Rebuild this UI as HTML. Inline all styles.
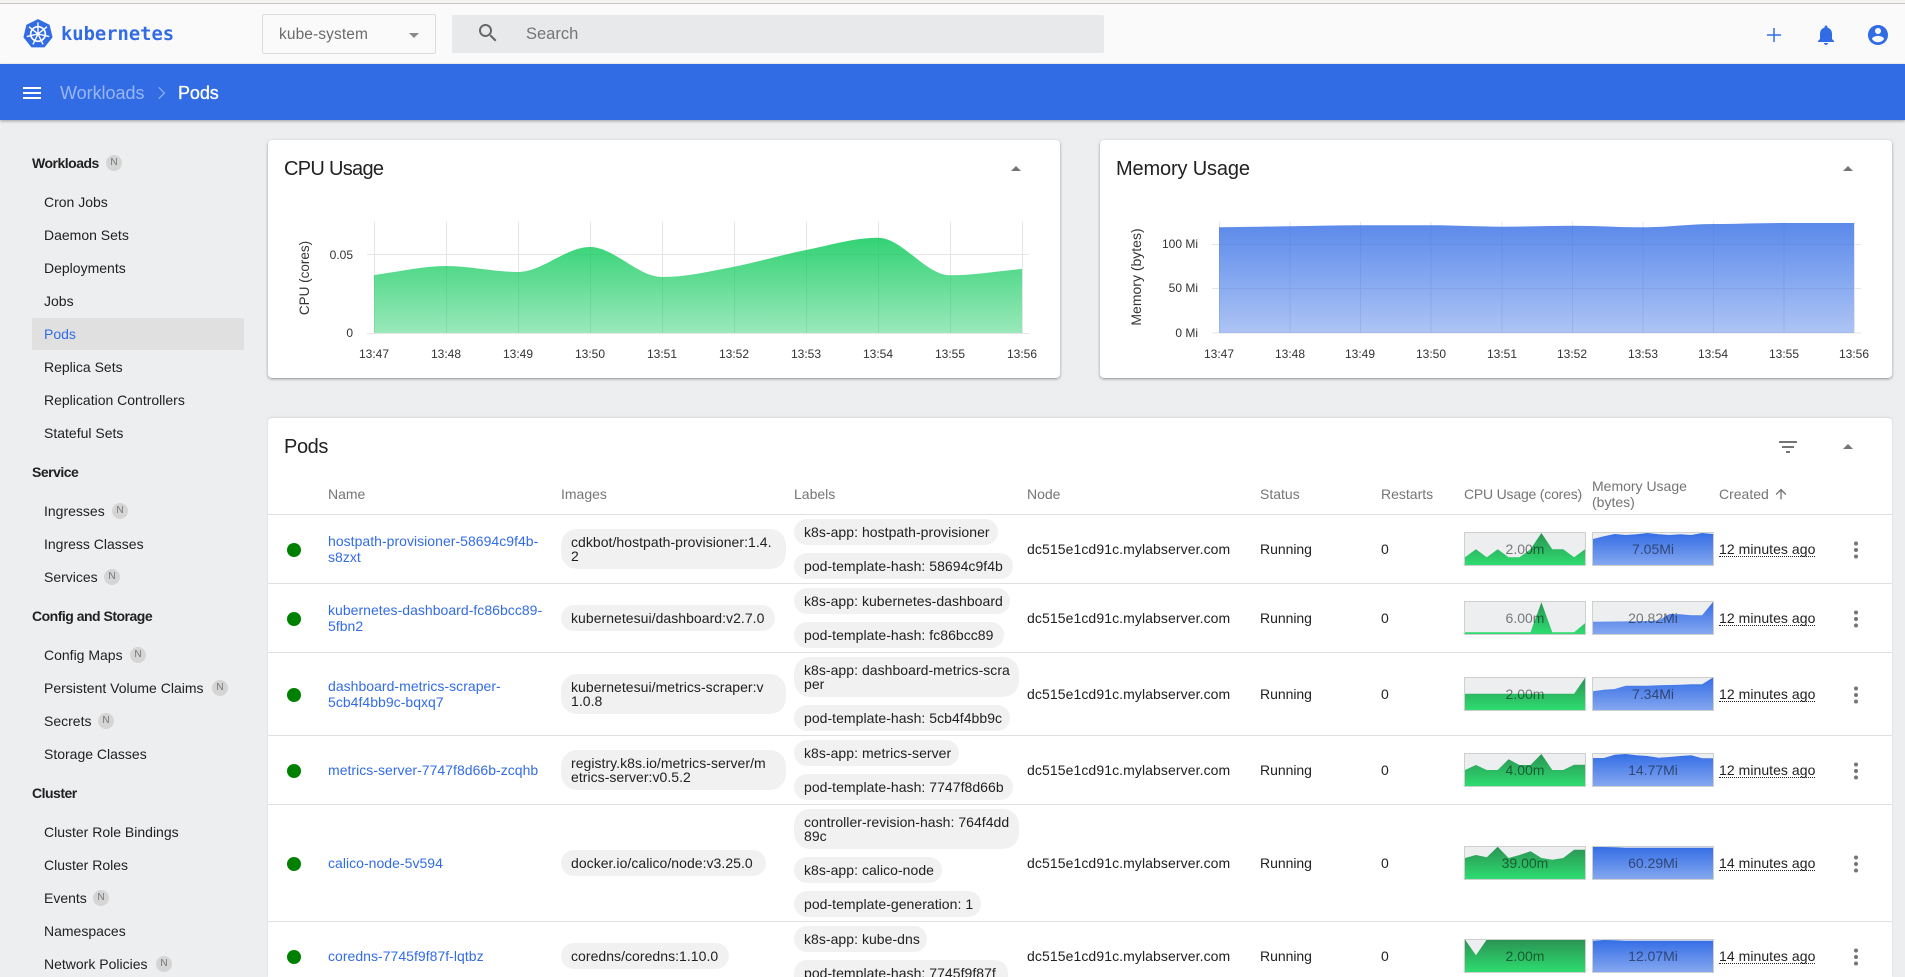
<!DOCTYPE html>
<html><head><meta charset="utf-8"><title>Pods - Kubernetes Dashboard</title>
<style>
html,body{margin:0;padding:0;width:1905px;height:977px;overflow:hidden;background:#edeef0;font-family:"Liberation Sans",Arial,sans-serif;font-size:14px;color:#212121}
div,span,svg,a{position:absolute;display:block}
#w{left:0;top:0;width:1905px;height:977px;overflow:hidden;background:#edeef0}
.t{white-space:nowrap;line-height:16px}
.s{white-space:nowrap;line-height:16px;left:44px;letter-spacing:0;color:#212121}
.h{white-space:nowrap;line-height:16px;left:32px;font-weight:bold;letter-spacing:-.5px}
.n{width:16px;height:16px;border-radius:50%;background:#d5d5d5;color:#757575;font-size:10px;line-height:16px;text-align:center}
.card{background:#fff;border-radius:4px;box-shadow:0 1px 3px rgba(0,0,0,.32),0 1px 1px rgba(0,0,0,.1)}
.title{font-size:20px;line-height:24px;white-space:nowrap;color:#212121}
.th{white-space:nowrap;line-height:16px;color:#757575}
.rl{height:1px;background:#e0e0e0;left:268px;width:1624px}
.dot{width:14px;height:14px;border-radius:50%;background:#008000;left:287px}
.l{left:328px;color:#326ce5;line-height:16px;white-space:nowrap;letter-spacing:.03px}
.c{background:#f1f1f1;border-radius:13px;line-height:14px;white-space:nowrap;box-sizing:border-box;padding:6px 0 6px 10px;color:#212121;letter-spacing:.04px}
.nd{left:1027px;letter-spacing:.09px}.st{left:1260px;letter-spacing:-.03px}.rs{left:1381px}
.sp{width:122px;height:34px}
.v{width:122px;text-align:center;line-height:16px;color:rgba(0,0,0,.5);white-space:nowrap}
.a{left:1719px;line-height:16px;white-space:nowrap;letter-spacing:.05px;border-bottom:1px dotted #222;height:15px}
.k{left:1854px;width:4px;height:4px;border-radius:50%;background:#757575;box-shadow:0 6.5px 0 #757575,0 -6.5px 0 #757575}
.ax{font-size:12px;fill:#333;font-family:"Liberation Sans",Arial,sans-serif}
</style></head><body>
<div id="w">
<svg width="0" height="0" style="position:absolute"><defs>
<linearGradient id="gc" gradientUnits="userSpaceOnUse" x1="0" y1="0" x2="0" y2="33"><stop offset="0" stop-color="#2a9252"/><stop offset="1" stop-color="#2edc70"/></linearGradient>
<linearGradient id="gm" gradientUnits="userSpaceOnUse" x1="0" y1="0" x2="0" y2="33"><stop offset="0" stop-color="#326ce5"/><stop offset="1" stop-color="#84a7f0"/></linearGradient>
<linearGradient id="ga" x1="0" y1="0" x2="0" y2="1"><stop offset="0" stop-color="#00c752" stop-opacity=".8"/><stop offset="1" stop-color="#00c752" stop-opacity=".4"/></linearGradient>
<linearGradient id="gb" x1="0" y1="0" x2="0" y2="1"><stop offset="0" stop-color="#326ce5" stop-opacity=".8"/><stop offset="1" stop-color="#326ce5" stop-opacity=".4"/></linearGradient>
</defs></svg>

<!-- top bar -->
<div style="left:0;top:0;width:1905px;height:64px;background:#fafafa"></div>
<div style="left:0;top:0;width:1905px;height:3px;background:#f4f2ee"></div>
<div style="left:0;top:3px;width:1905px;height:1px;background:#c9c5c1"></div>
<svg style="left:22px;top:18px" width="32" height="32" viewBox="0 0 32 32">
<path d="M16 2 L26.9 7.3 L29.7 19.1 L22.1 28.6 L9.9 28.6 L2.3 19.1 L5.1 7.3 Z" fill="#326ce5" stroke="#326ce5" stroke-width="1.6" stroke-linejoin="round"/>
<g stroke="#fff" fill="none" stroke-linecap="round"><circle cx="16" cy="16" r="7.3" stroke-width="1.7"/>
<path stroke-width="1.4" d="M16 16L16 5M16 16L24.6 9.1M16 16L26.7 18.4M16 16L20.8 25.9M16 16L11.2 25.9M16 16L5.3 18.4M16 16L7.4 9.1"/></g>
<circle cx="16" cy="16" r="1.8" fill="#fff"/></svg>
<div class="t" style="left:61px;top:23px;line-height:24px;font-family:'DejaVu Sans Mono',monospace;font-weight:bold;font-size:18.8px;color:#326ce5">kubernetes</div>
<div style="left:262px;top:14px;width:172px;height:38px;border:1px solid #dcdcdc;border-radius:2px;background:#fafafa"></div>
<div class="t" style="left:279px;top:27px;color:#6b6b6b;font-size:15.5px;letter-spacing:.1px">kube-system</div>
<svg style="left:402px;top:23px" width="24" height="24" viewBox="0 0 24 24"><path d="M7 10l5 5 5-5z" fill="#8a8a8a"/></svg>
<div style="left:452px;top:15px;width:652px;height:38px;background:#e7e9ea;border-radius:2px"></div>
<svg style="left:476px;top:21px" width="24" height="24" viewBox="0 0 24 24"><path fill="#666" d="M15.5 14h-.79l-.28-.27C15.41 12.59 16 11.11 16 9.5 16 5.91 13.09 3 9.5 3S3 5.91 3 9.5 5.91 16 9.5 16c1.61 0 3.09-.59 4.23-1.57l.27.28v.79l5 4.99L20.49 19l-4.99-5zm-6 0C7.01 14 5 11.99 5 9.5S7.01 5 9.5 5 14 7.01 14 9.5 11.99 14 9.5 14z"/></svg>
<div class="t" style="left:526px;top:26px;color:#757575;font-size:16.5px;letter-spacing:0">Search</div>
<svg style="left:1762px;top:23px" width="24" height="24" viewBox="0 0 24 24"><path fill="#326ce5" d="M19 12.75h-6.25V19h-1.5v-6.25H5v-1.5h6.25V5h1.5v6.25H19z"/></svg>
<svg style="left:1814px;top:23px" width="24" height="24" viewBox="0 0 24 24"><path fill="#326ce5" d="M12 22c1.1 0 2-.9 2-2h-4c0 1.1.89 2 2 2zm6-6v-5c0-3.07-1.64-5.64-4.5-6.32V4c0-.83-.67-1.5-1.5-1.5s-1.5.67-1.5 1.5v.68C7.63 5.36 6 7.92 6 11v5l-2 2v1h16v-1l-2-2z"/></svg>
<svg style="left:1866px;top:23px" width="24" height="24" viewBox="0 0 24 24"><path fill="#326ce5" d="M12 2C6.48 2 2 6.48 2 12s4.48 10 10 10 10-4.48 10-10S17.52 2 12 2zm0 3c1.66 0 3 1.34 3 3s-1.34 3-3 3-3-1.34-3-3 1.34-3 3-3zm0 14.2c-2.5 0-4.71-1.28-6-3.22.03-1.99 4-3.08 6-3.08 1.99 0 5.97 1.09 6 3.08-1.29 1.94-3.5 3.22-6 3.22z"/></svg>

<!-- blue bar -->
<div style="left:0;top:64px;width:1905px;height:56px;background:#326ce5;box-shadow:0 1px 3px rgba(0,0,0,.35)"></div>
<svg style="left:20px;top:81px" width="24" height="24" viewBox="0 0 24 24"><path fill="#fff" d="M3 18h18v-2H3v2zm0-5h18v-2H3v2zm0-7v2h18V6H3z"/></svg>
<div class="t" style="left:60px;top:82px;line-height:22px;font-size:18px;color:#9ab6f2;letter-spacing:-.03px">Workloads</div>
<svg style="left:150px;top:81px" width="24" height="24" viewBox="0 0 24 24"><path fill="#9ab6f2" d="M9.2 6L8.4 6.8 13.6 12l-5.2 5.2.8.8 6-6z"/></svg>
<div class="t" style="left:178px;top:82px;line-height:22px;font-size:18px;color:#fff;letter-spacing:-.1px;-webkit-text-stroke:.3px #fff">Pods</div>

<!-- sidebar -->
<div class="h" style="top:155px">Workloads</div><div class="n" style="left:106px;top:155px">N</div>
<div class="s" style="top:194px">Cron Jobs</div>
<div class="s" style="top:227px">Daemon Sets</div>
<div class="s" style="top:260px">Deployments</div>
<div class="s" style="top:293px">Jobs</div>
<div style="left:32px;top:318px;width:212px;height:32px;background:#e0e0e0;border-radius:2px"></div>
<div class="s" style="top:326px;color:#326ce5">Pods</div>
<div class="s" style="top:359px">Replica Sets</div>
<div class="s" style="top:392px">Replication Controllers</div>
<div class="s" style="top:425px">Stateful Sets</div>
<div class="h" style="top:464px">Service</div>
<div class="s" style="top:503px">Ingresses</div><div class="n" style="left:112px;top:503px">N</div>
<div class="s" style="top:536px">Ingress Classes</div>
<div class="s" style="top:569px">Services</div><div class="n" style="left:104px;top:569px">N</div>
<div class="h" style="top:608px">Config and Storage</div>
<div class="s" style="top:647px">Config Maps</div><div class="n" style="left:130px;top:647px">N</div>
<div class="s" style="top:680px">Persistent Volume Claims</div><div class="n" style="left:212px;top:680px">N</div>
<div class="s" style="top:713px">Secrets</div><div class="n" style="left:98px;top:713px">N</div>
<div class="s" style="top:746px">Storage Classes</div>
<div class="h" style="top:785px">Cluster</div>
<div class="s" style="top:824px">Cluster Role Bindings</div>
<div class="s" style="top:857px">Cluster Roles</div>
<div class="s" style="top:890px">Events</div><div class="n" style="left:93px;top:890px">N</div>
<div class="s" style="top:923px">Namespaces</div>
<div class="s" style="top:956px">Network Policies</div><div class="n" style="left:156px;top:956px">N</div>

<!-- CPU card -->
<div class="card" style="left:268px;top:140px;width:792px;height:238px"></div>
<div class="title" style="left:284px;top:157px;letter-spacing:-.7px">CPU Usage</div>
<svg style="left:1004px;top:157px" width="24" height="24" viewBox="0 0 24 24"><path d="M7 14l5-5 5 5z" fill="#757575"/></svg>
<svg style="left:268px;top:140px" width="792" height="238" viewBox="268 140 792 238">
<g stroke="#e6e6e6" stroke-width="1" fill="none"><path d="M374.5 222V333M446.5 222V333M518.5 222V333M590.5 222V333M662.5 222V333M734.5 222V333M806.5 222V333M878.5 222V333M950.5 222V333M1022.5 222V333"/><path d="M367 254.5H1029M367 333.5H1029"/></g>
<path fill="url(#ga)" d="M374 275 C398 272,422 266,446 266 C470 266,494 272,518 272 C542 272,566 247,590 247 C614 247,638 277,662 277 C686 277,710 271.3,734 266.7 C758 262.1,782 254.8,806 250 C830 245.2,854 237.7,878 237.7 C902 237.7,926 275.3,950 275.3 C974 275.3,998 271,1022 269 L1022 333 L374 333Z"/>
<g class="ax" text-anchor="middle"><text x="374" y="358">13:47</text><text x="446" y="358">13:48</text><text x="518" y="358">13:49</text><text x="590" y="358">13:50</text><text x="662" y="358">13:51</text><text x="734" y="358">13:52</text><text x="806" y="358">13:53</text><text x="878" y="358">13:54</text><text x="950" y="358">13:55</text><text x="1022" y="358">13:56</text></g>
<g class="ax" text-anchor="end"><text x="353" y="259">0.05</text><text x="353" y="337">0</text></g>
<text class="ax" style="font-size:13.5px" text-anchor="middle" transform="translate(309,278) rotate(-90)">CPU (cores)</text>
</svg>

<!-- Memory card -->
<div class="card" style="left:1100px;top:140px;width:792px;height:238px"></div>
<div class="title" style="left:1116px;top:157px;letter-spacing:-.15px">Memory Usage</div>
<svg style="left:1836px;top:157px" width="24" height="24" viewBox="0 0 24 24"><path d="M7 14l5-5 5 5z" fill="#757575"/></svg>
<svg style="left:1100px;top:140px" width="792" height="238" viewBox="1100 140 792 238">
<g stroke="#e6e6e6" stroke-width="1" fill="none"><path d="M1219.5 222V333M1290 222V333M1360.5 222V333M1431 222V333M1502 222V333M1572.5 222V333M1643 222V333M1713.5 222V333M1784 222V333M1854.5 222V333"/><path d="M1212 244.5H1861M1212 288.5H1861M1212 333H1861"/></g>
<path fill="url(#gb)" d="M1219 227.3 C1243 227,1266 226.6,1290 226.3 C1314 226,1337 225.3,1361 225.3 L1431 225.3 C1455 225.3,1478 226.7,1502 226.7 C1526 226.7,1549 225.7,1573 225.7 C1597 225.7,1619 227.3,1643 227.3 C1667 227.3,1690 224,1714 224 C1738 224,1760 223,1784 223 L1854 223 L1854 333 L1219 333Z"/>
<g class="ax" text-anchor="middle"><text x="1219" y="358">13:47</text><text x="1290" y="358">13:48</text><text x="1360" y="358">13:49</text><text x="1431" y="358">13:50</text><text x="1502" y="358">13:51</text><text x="1572" y="358">13:52</text><text x="1643" y="358">13:53</text><text x="1713" y="358">13:54</text><text x="1784" y="358">13:55</text><text x="1854" y="358">13:56</text></g>
<g class="ax" text-anchor="end"><text x="1198" y="248">100 Mi</text><text x="1198" y="292">50 Mi</text><text x="1198" y="337">0 Mi</text></g>
<text class="ax" style="font-size:14px" text-anchor="middle" transform="translate(1141,277) rotate(-90)">Memory (bytes)</text>
</svg>

<!-- Pods card -->
<div class="card" style="left:268px;top:418px;width:1624px;height:559px;border-radius:4px 4px 0 0;box-shadow:0 -1px 2px rgba(0,0,0,.1)"></div>
<div class="title" style="left:284px;top:435px;letter-spacing:-.4px">Pods</div>
<svg style="left:1776px;top:435px" width="24" height="24" viewBox="0 0 24 24"><path fill="#757575" d="M10 18h4v-2h-4v2zM3 6v2h18V6H3zm3 7h12v-2H6v2z"/></svg>
<svg style="left:1836px;top:435px" width="24" height="24" viewBox="0 0 24 24"><path d="M7 14l5-5 5 5z" fill="#757575"/></svg>

<div class="th" style="left:328px;top:486px">Name</div>
<div class="th" style="left:561px;top:486px">Images</div>
<div class="th" style="left:794px;top:486px">Labels</div>
<div class="th" style="left:1027px;top:486px">Node</div>
<div class="th" style="left:1260px;top:486px">Status</div>
<div class="th" style="left:1381px;top:486px">Restarts</div>
<div class="th" style="left:1464px;top:486px;letter-spacing:-.2px">CPU Usage (cores)</div>
<div class="th" style="left:1592px;top:478px">Memory Usage<br>(bytes)</div>
<div class="th" style="left:1719px;top:486px">Created</div>
<svg style="left:1773px;top:486px" width="16" height="16" viewBox="0 0 24 24"><path fill="#757575" d="M4 12l1.41 1.41L11 7.83V20h2V7.83l5.58 5.59L20 12l-8-8-8 8z"/></svg>

<div class="rl" style="top:514px"></div>
<div class="rl" style="top:583px"></div>
<div class="rl" style="top:652px"></div>
<div class="rl" style="top:735px"></div>
<div class="rl" style="top:804px"></div>
<div class="rl" style="top:921px"></div>

<!-- row 1 -->
<div class="dot" style="top:543px"></div>
<div class="l" style="top:533px">hostpath-provisioner-58694c9f4b-<br>s8zxt</div>
<div class="c" style="left:561px;top:529px;width:225px;height:40px;border-radius:16px">cdkbot/hostpath-provisioner:1.4.<br>2</div>
<div class="c" style="left:794px;top:519px;width:204px;height:26px">k8s-app: hostpath-provisioner</div>
<div class="c" style="left:794px;top:553px;width:219px;height:26px">pod-template-hash: 58694c9f4b</div>
<div class="t nd" style="top:541px">dc515e1cd91c.mylabserver.com</div><div class="t st" style="top:541px">Running</div><div class="t rs" style="top:541px">0</div>
<svg class="sp" style="left:1464px;top:532px" viewBox="0 0 122 34"><rect x=".5" y=".5" width="121" height="33" fill="#edeef0"/><polygon fill="url(#gc)" points="1,25.3 11.9,17.3 22.8,25.3 33.7,17.3 44.6,25.3 55.5,25.3 66.5,17.3 77.4,1 88.3,17.3 99.2,17.3 110.1,25.3 121,17.3 121,33 1,33"/><rect x=".5" y=".5" width="121" height="33" fill="none" stroke="#cfcfcf"/></svg>
<div class="v" style="left:1464px;top:541px">2.00m</div>
<svg class="sp" style="left:1592px;top:532px" viewBox="0 0 122 34"><rect x=".5" y=".5" width="121" height="33" fill="#edeef0"/><polygon fill="url(#gm)" points="1,7 11.9,4.3 22.8,2 33.7,3 44.6,2.3 55.5,1 66.5,2.3 77.4,3 88.3,2.3 99.2,3 110.1,1 121,2 121,33 1,33"/><rect x=".5" y=".5" width="121" height="33" fill="none" stroke="#cfcfcf"/></svg>
<div class="v" style="left:1592px;top:541px">7.05Mi</div>
<div class="a" style="top:541px">12 minutes ago</div>
<div class="k" style="top:548px"></div>

<!-- row 2 -->
<div class="dot" style="top:612px"></div>
<div class="l" style="top:602px">kubernetes-dashboard-fc86bcc89-<br>5fbn2</div>
<div class="c" style="left:561px;top:605px;width:214px;height:26px">kubernetesui/dashboard:v2.7.0</div>
<div class="c" style="left:794px;top:588px;width:216px;height:26px">k8s-app: kubernetes-dashboard</div>
<div class="c" style="left:794px;top:622px;width:210px;height:26px">pod-template-hash: fc86bcc89</div>
<div class="t nd" style="top:610px">dc515e1cd91c.mylabserver.com</div><div class="t st" style="top:610px">Running</div><div class="t rs" style="top:610px">0</div>
<svg class="sp" style="left:1464px;top:601px" viewBox="0 0 122 34"><rect x=".5" y=".5" width="121" height="33" fill="#edeef0"/><polygon fill="url(#gc)" points="1,31.3 66.5,31.3 77.4,1.3 88.3,31.3 110.1,31.3 121,22.3 121,33 1,33"/><rect x=".5" y=".5" width="121" height="33" fill="none" stroke="#cfcfcf"/></svg>
<div class="v" style="left:1464px;top:610px">6.00m</div>
<svg class="sp" style="left:1592px;top:601px" viewBox="0 0 122 34"><rect x=".5" y=".5" width="121" height="33" fill="#edeef0"/><polygon fill="url(#gm)" points="1,20.7 22.8,20.5 44.6,20.3 55.5,20 66.5,19.5 77.4,13 88.3,13.3 99.2,14.3 110.1,14.3 121,1 121,33 1,33"/><rect x=".5" y=".5" width="121" height="33" fill="none" stroke="#cfcfcf"/></svg>
<div class="v" style="left:1592px;top:610px">20.82Mi</div>
<div class="a" style="top:610px">12 minutes ago</div>
<div class="k" style="top:617px"></div>

<!-- row 3 -->
<div class="dot" style="top:688px"></div>
<div class="l" style="top:678px">dashboard-metrics-scraper-<br>5cb4f4bb9c-bqxq7</div>
<div class="c" style="left:561px;top:674px;width:225px;height:40px;border-radius:16px">kubernetesui/metrics-scraper:v<br>1.0.8</div>
<div class="c" style="left:794px;top:657px;width:225px;height:40px;border-radius:16px">k8s-app: dashboard-metrics-scra<br>per</div>
<div class="c" style="left:794px;top:705px;width:216px;height:26px">pod-template-hash: 5cb4f4bb9c</div>
<div class="t nd" style="top:686px">dc515e1cd91c.mylabserver.com</div><div class="t st" style="top:686px">Running</div><div class="t rs" style="top:686px">0</div>
<svg class="sp" style="left:1464px;top:677px" viewBox="0 0 122 34"><rect x=".5" y=".5" width="121" height="33" fill="#edeef0"/><polygon fill="url(#gc)" points="1,16.7 110.1,16.7 121,1 121,33 1,33"/><rect x=".5" y=".5" width="121" height="33" fill="none" stroke="#cfcfcf"/></svg>
<div class="v" style="left:1464px;top:686px">2.00m</div>
<svg class="sp" style="left:1592px;top:677px" viewBox="0 0 122 34"><rect x=".5" y=".5" width="121" height="33" fill="#edeef0"/><polygon fill="url(#gm)" points="1,14.3 11.9,12.7 22.8,12 33.7,8.7 44.6,8.7 55.5,8.7 66.5,8.3 77.4,8 88.3,7.7 99.2,7.3 110.1,7.3 121,.5 121,33 1,33"/><rect x=".5" y=".5" width="121" height="33" fill="none" stroke="#cfcfcf"/></svg>
<div class="v" style="left:1592px;top:686px">7.34Mi</div>
<div class="a" style="top:686px">12 minutes ago</div>
<div class="k" style="top:693px"></div>

<!-- row 4 -->
<div class="dot" style="top:764px"></div>
<div class="l" style="top:762px">metrics-server-7747f8d66b-zcqhb</div>
<div class="c" style="left:561px;top:750px;width:225px;height:40px;border-radius:16px">registry.k8s.io/metrics-server/m<br>etrics-server:v0.5.2</div>
<div class="c" style="left:794px;top:740px;width:165px;height:26px">k8s-app: metrics-server</div>
<div class="c" style="left:794px;top:774px;width:219px;height:26px">pod-template-hash: 7747f8d66b</div>
<div class="t nd" style="top:762px">dc515e1cd91c.mylabserver.com</div><div class="t st" style="top:762px">Running</div><div class="t rs" style="top:762px">0</div>
<svg class="sp" style="left:1464px;top:753px" viewBox="0 0 122 34"><rect x=".5" y=".5" width="121" height="33" fill="#edeef0"/><polygon fill="url(#gc)" points="1,17 11.9,12 22.8,17 33.7,17 44.6,6.3 55.5,12 66.5,12 77.4,1 88.3,17 99.2,17 110.1,11.7 121,11.7 121,33 1,33"/><rect x=".5" y=".5" width="121" height="33" fill="none" stroke="#cfcfcf"/></svg>
<div class="v" style="left:1464px;top:762px">4.00m</div>
<svg class="sp" style="left:1592px;top:753px" viewBox="0 0 122 34"><rect x=".5" y=".5" width="121" height="33" fill="#edeef0"/><polygon fill="url(#gm)" points="1,5 11.9,5 22.8,1.7 33.7,1 44.6,2.3 55.5,3 66.5,4.7 77.4,4 88.3,3 99.2,2.3 110.1,5.3 121,5.3 121,33 1,33"/><rect x=".5" y=".5" width="121" height="33" fill="none" stroke="#cfcfcf"/></svg>
<div class="v" style="left:1592px;top:762px">14.77Mi</div>
<div class="a" style="top:762px">12 minutes ago</div>
<div class="k" style="top:769px"></div>

<!-- row 5 -->
<div class="dot" style="top:857px"></div>
<div class="l" style="top:855px">calico-node-5v594</div>
<div class="c" style="left:561px;top:850px;width:205px;height:26px">docker.io/calico/node:v3.25.0</div>
<div class="c" style="left:794px;top:809px;width:225px;height:40px;border-radius:16px">controller-revision-hash: 764f4dd<br>89c</div>
<div class="c" style="left:794px;top:857px;width:148px;height:26px">k8s-app: calico-node</div>
<div class="c" style="left:794px;top:891px;width:187px;height:26px">pod-template-generation: 1</div>
<div class="t nd" style="top:855px">dc515e1cd91c.mylabserver.com</div><div class="t st" style="top:855px">Running</div><div class="t rs" style="top:855px">0</div>
<svg class="sp" style="left:1464px;top:846px" viewBox="0 0 122 34"><rect x=".5" y=".5" width="121" height="33" fill="#edeef0"/><polygon fill="url(#gc)" points="1,12 11.9,9 22.8,11.3 33.7,.7 44.6,12 55.5,9 66.5,5.3 77.4,12 88.3,13.7 99.2,12 110.1,3.7 121,3.7 121,33 1,33"/><rect x=".5" y=".5" width="121" height="33" fill="none" stroke="#cfcfcf"/></svg>
<div class="v" style="left:1464px;top:855px">39.00m</div>
<svg class="sp" style="left:1592px;top:846px" viewBox="0 0 122 34"><rect x=".5" y=".5" width="121" height="33" fill="#edeef0"/><polygon fill="url(#gm)" points="1,.7 11.9,1 22.8,1.3 33.7,1.7 121,1.7 121,33 1,33"/><rect x=".5" y=".5" width="121" height="33" fill="none" stroke="#cfcfcf"/></svg>
<div class="v" style="left:1592px;top:855px">60.29Mi</div>
<div class="a" style="top:855px">14 minutes ago</div>
<div class="k" style="top:862px"></div>

<!-- row 6 -->
<div class="dot" style="top:950px"></div>
<div class="l" style="top:948px">coredns-7745f9f87f-lqtbz</div>
<div class="c" style="left:561px;top:943px;width:168px;height:26px">coredns/coredns:1.10.0</div>
<div class="c" style="left:794px;top:926px;width:133px;height:26px">k8s-app: kube-dns</div>
<div class="c" style="left:794px;top:960px;width:214px;height:17px;overflow:hidden;padding:6px 0 0 10px;border-radius:13px 13px 0 0">pod-template-hash: 7745f9f87f</div>
<div class="t nd" style="top:948px">dc515e1cd91c.mylabserver.com</div><div class="t st" style="top:948px">Running</div><div class="t rs" style="top:948px">0</div>
<svg class="sp" style="left:1464px;top:939px" viewBox="0 0 122 34"><rect x=".5" y=".5" width="121" height="33" fill="#edeef0"/><polygon fill="url(#gc)" points="1,.5 11.9,16.3 22.8,.5 121,.5 121,33 1,33"/><rect x=".5" y=".5" width="121" height="33" fill="none" stroke="#cfcfcf"/></svg>
<div class="v" style="left:1464px;top:948px">2.00m</div>
<svg class="sp" style="left:1592px;top:939px" viewBox="0 0 122 34"><rect x=".5" y=".5" width="121" height="33" fill="#edeef0"/><polygon fill="url(#gm)" points="1,1.7 11.9,1 22.8,1.3 33.7,1.7 121,1.7 121,33 1,33"/><rect x=".5" y=".5" width="121" height="33" fill="none" stroke="#cfcfcf"/></svg>
<div class="v" style="left:1592px;top:948px">12.07Mi</div>
<div class="a" style="top:948px">14 minutes ago</div>
<div class="k" style="top:955px"></div>
</div>
</body></html>
